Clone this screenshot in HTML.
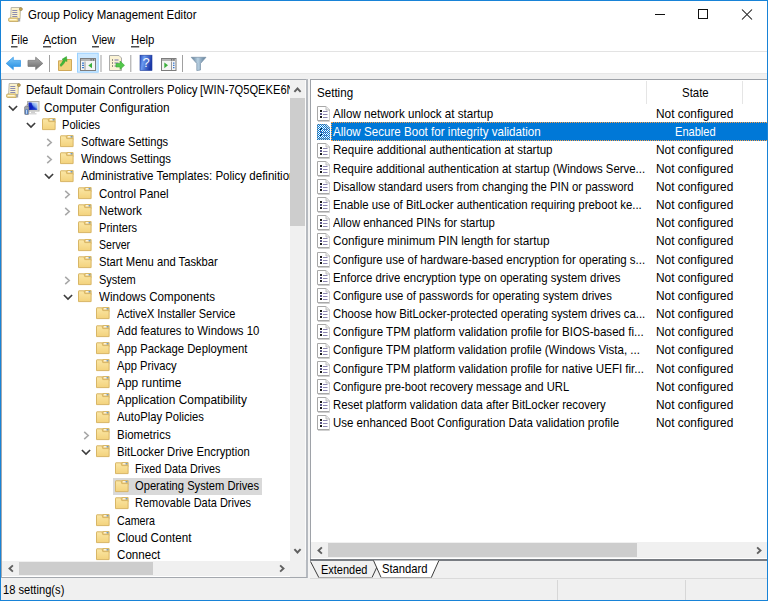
<!DOCTYPE html>
<html><head><meta charset="utf-8"><style>
html,body{margin:0;padding:0;width:768px;height:601px;overflow:hidden;background:#fff}
.b{position:absolute}
svg{display:block}
.t{position:absolute;white-space:nowrap;line-height:14px;font-family:"Liberation Sans", sans-serif}
u{text-decoration:underline;text-underline-offset:2px}
</style></head><body>
<div class="b" style="left:0px;top:0px;width:768px;height:601px;background:#fff"></div><div class="t " style="left:28.10px;top:8.10px;color:#000;font-size:11.4px;transform:scale(1.0042,1.05);transform-origin:0 7px;">Group Policy Management Editor</div><div class="b" style="left:655px;top:14px;width:10px;height:1px;background:#111"></div><div class="b" style="left:698px;top:9px;width:10px;height:10px;border:1px solid #111;box-sizing:border-box"></div><svg class="b" style="left:741px;top:9px" width="12" height="11" viewBox="0 0 12 11"><path d="M1 0.5L11 10.5M11 0.5L1 10.5" stroke="#111" stroke-width="1.05"/></svg><svg class="b" style="left:0px;top:50px" width="215" height="24" viewBox="0 50 215 24"><defs><linearGradient id="gb" x1="0" y1="0" x2="0" y2="1"><stop offset="0" stop-color="#7cc8f8"/><stop offset="1" stop-color="#1f8ae0"/></linearGradient><linearGradient id="gg" x1="0" y1="0" x2="0" y2="1"><stop offset="0" stop-color="#b0b0b0"/><stop offset="1" stop-color="#6a6a6a"/></linearGradient><linearGradient id="gh" x1="0" y1="0" x2="1" y2="0.3"><stop offset="0" stop-color="#2a4cc0"/><stop offset="0.35" stop-color="#6a9af0"/><stop offset="1" stop-color="#1c38a8"/></linearGradient><linearGradient id="gf" x1="0" y1="0" x2="1" y2="0"><stop offset="0" stop-color="#5a7890"/><stop offset="0.45" stop-color="#b8d0e2"/><stop offset="1" stop-color="#587690"/></linearGradient></defs><path d="M6.2 63.4L13.3 57.2V60.4H20.5V66.4H13.3V69.6Z" fill="url(#gb)" stroke="#3a9ae8" stroke-width="0.8" stroke-linejoin="round"/><path d="M42.8 63.4L35.7 57.2V60.4H28V66.4H35.7V69.6Z" fill="url(#gg)" stroke="#7a7a7a" stroke-width="0.8" stroke-linejoin="round"/><rect x="49" y="55" width="1" height="17" fill="#a0a0a0"/><rect x="100.5" y="55" width="1" height="17" fill="#a0a0a0"/><rect x="130.3" y="55" width="1" height="17" fill="#a0a0a0"/><rect x="182" y="55" width="1" height="17" fill="#a0a0a0"/><path d="M64 59.5H71.5V70.5H58.5V60.8H63Z" fill="#f3d27e" stroke="#c9a24e" stroke-width="0.9"/><path d="M60 65Q62 62.5 63.5 60L62 59.3L66.5 56.6L67 61.5L65.6 60.8Q64 64 61 66.5Z" fill="#3fb83a" stroke="#2f9a2a" stroke-width="0.5"/><rect x="77.5" y="53.2" width="20.7" height="19" fill="#cce8ff" stroke="#99d1ff" stroke-width="1"/><rect x="80.5" y="58.5" width="15" height="12" fill="#f4f4f4" stroke="#7d7d7d" stroke-width="1"/><rect x="81" y="59" width="14" height="2" fill="#b4b4b4"/><rect x="90.5" y="59.3" width="1.2" height="1.2" fill="#505050"/><rect x="92.8" y="59.3" width="1.2" height="1.2" fill="#505050"/><path d="M85 61.5V70" stroke="#9a9a9a" stroke-width="1"/><path d="M82 63.2H84M82 65.4H84M82 67.6H84" stroke="#3a78d0" stroke-width="1.2"/><path d="M92 62.8L88.3 65.5L92 68.2Z" fill="#3cb03c"/><path d="M109.5 55.5H119L121.5 58V70.5H109.5Z" fill="#fbf3d5" stroke="#a3a3a3" stroke-width="0.9"/><path d="M112 60H113M112 63H113M112 66H113" stroke="#303030" stroke-width="1.2"/><path d="M114.5 60H118.5M114.5 63H118.5M114.5 66H118" stroke="#7070a8" stroke-width="1"/><path d="M116 63.5H120V61L124.5 65.3L120 69.5V67H116Z" fill="#52c84a" stroke="#3aa835" stroke-width="0.6"/><rect x="140" y="55.2" width="12" height="15.3" fill="url(#gh)" stroke="#1e3c9a" stroke-width="0.6"/><text x="146.2" y="67.3" font-family="Liberation Sans" font-size="13" fill="#f4f6ff" text-anchor="middle">?</text><rect x="161.5" y="58.5" width="14.5" height="12" fill="#f4f4f4" stroke="#7d7d7d" stroke-width="1"/><rect x="162" y="59" width="13.5" height="2" fill="#b4b4b4"/><rect x="171" y="59.3" width="1.2" height="1.2" fill="#505050"/><rect x="173.3" y="59.3" width="1.2" height="1.2" fill="#505050"/><path d="M171.5 61.5V70" stroke="#9a9a9a" stroke-width="1"/><path d="M173 63.2H174.5M173 65.4H174.5M173 67.6H174.5" stroke="#3a78d0" stroke-width="1.2"/><path d="M164.3 62.6L168 65.3L164.3 68.2Z" fill="#3cb03c"/><path d="M191.2 57.3H206L200.5 63.5V70L196.8 70.6V63.5Z" fill="url(#gf)" stroke="#7890a8" stroke-width="0.7" stroke-linejoin="round"/></svg><div class="t " style="left:10.80px;top:33.10px;color:#000;font-size:11.4px;transform:scale(0.9389,1.05);transform-origin:0 7px;"><u>F</u>ile</div><div class="t " style="left:43.10px;top:33.10px;color:#000;font-size:11.4px;transform:scale(1.0613,1.05);transform-origin:0 7px;"><u>A</u>ction</div><div class="t " style="left:91.70px;top:33.10px;color:#000;font-size:11.4px;transform:scale(0.9400,1.05);transform-origin:0 7px;"><u>V</u>iew</div><div class="t " style="left:131.25px;top:33.10px;color:#000;font-size:11.4px;transform:scale(0.9978,1.05);transform-origin:0 7px;"><u>H</u>elp</div><div class="b" style="left:1px;top:51px;width:766px;height:1px;background:#e3e3e3"></div><div class="b" style="left:1px;top:73px;width:766px;height:1px;background:#e8e8e8"></div><div class="b" style="left:1px;top:74px;width:766px;height:5px;background:#f0f0f0"></div><div class="b" style="left:1px;top:79px;width:306px;height:499px;border:1px solid #a4a8ae;box-sizing:border-box;background:#fff"></div><div class="b" style="left:113px;top:478px;width:149px;height:17px;background:#d9d9d9"></div><div class="b" style="left:6px;top:83.30px"><svg width="15" height="15" viewBox="0 0 15 15"><path d="M3.2 0.5H12.6L12 11.5H2.6Z" fill="#fbf2cc" stroke="#b4b0a4" stroke-width="0.9"/><path d="M11.6 1.5V11" stroke="#f3e2a0" stroke-width="1"/><circle cx="12.9" cy="2.1" r="1.5" fill="#c9a850" stroke="#8e7a48" stroke-width="0.6"/><path d="M4.3 3.5H9.3M4.3 5.5H9.3M4.3 7.5H9.3M4.3 9.5H9.3" stroke="#8c8cb0" stroke-width="1"/><path d="M0.5 12.3Q0.5 11 1.8 11H10.2V14.5H1.8Q0.5 14.5 0.5 13.3Z" fill="#f0da92" stroke="#c0a35a" stroke-width="0.8"/><path d="M1.8 12.6H8.6" stroke="#fffae0" stroke-width="1"/><rect x="10" y="11" width="2.2" height="3.5" fill="#a6a6a6"/></svg></div><div class="t " style="left:25.69px;top:83.30px;color:#000;font-size:11.4px;transform:scale(1.0077,1.05);transform-origin:0 7px;">Default Domain Controllers Policy</div><div class="t " style="left:200.02px;top:83.30px;color:#000;font-size:11.4px;transform:scale(0.9770,1.05);transform-origin:0 7px;">[WIN-7Q5QEKE6N</div><div class="b" style="left:8.00px;top:104.52px"><svg width="10" height="7" viewBox="0 0 10 7"><path d="M0.9 1L5 5.1L9.1 1" fill="none" stroke="#3c3c3c" stroke-width="1.6"/></svg></div><div class="b" style="left:24px;top:100.62px"><svg width="16" height="14" viewBox="0 0 16 14"><defs><linearGradient id="scr" x1="0" y1="1" x2="1" y2="0"><stop offset="0" stop-color="#0010a8"/><stop offset="0.45" stop-color="#1a3cd0"/><stop offset="0.6" stop-color="#7aa4ec"/><stop offset="1" stop-color="#d8e8fc"/></linearGradient></defs><rect x="3.5" y="0.5" width="11.5" height="9.5" fill="#e8e8e4" stroke="#b0b0ac"/><rect x="4.6" y="1.6" width="8.8" height="7.3" fill="url(#scr)"/><path d="M4.6 1.6H7.5L9 6.5L4.6 8.9Z" fill="#0a1cc0" opacity="0.85"/><rect x="7" y="10" width="4" height="2" fill="#cfcfcf"/><rect x="5.5" y="12" width="7" height="1.5" fill="#d8d8d8"/><rect x="0.6" y="5.5" width="4.2" height="8" rx="0.8" fill="#a0a4a8" stroke="#7c8088" stroke-width="0.7"/><rect x="1.3" y="8.5" width="2.8" height="4.7" fill="#3f72c0"/><rect x="2" y="9" width="1.2" height="3.8" fill="#bcd6f4"/><path d="M1.5 5.5L3 3.5H5" stroke="#8a8a8a" stroke-width="0.7" fill="none"/></svg></div><div class="t " style="left:44.30px;top:100.52px;color:#000;font-size:11.4px;transform:scale(1.0392,1.05);transform-origin:0 7px;">Computer Configuration</div><div class="b" style="left:26.20px;top:121.73px"><svg width="10" height="7" viewBox="0 0 10 7"><path d="M0.9 1L5 5.1L9.1 1" fill="none" stroke="#3c3c3c" stroke-width="1.6"/></svg></div><div class="b" style="left:41.80px;top:118.03px"><svg width="15" height="13" viewBox="0 0 15 13"><defs><linearGradient id="fo" x1="0" y1="0" x2="0" y2="1"><stop offset="0" stop-color="#fbe7a6"/><stop offset="1" stop-color="#f3d27c"/></linearGradient></defs><path d="M6.5 0.5H13.1V4.5H6.5Z" fill="#ebc978" stroke="#d9b866" stroke-width="1"/><path d="M7.8 1.8H10.8" stroke="#fff" stroke-width="1.1"/><path d="M10.6 1.8H12.4" stroke="#4b8edb" stroke-width="1.1"/><path d="M0.5 1.2Q0.5 0.8 1 0.8H5.9L6.8 3.6H13.1V11.6H0.5Z" fill="url(#fo)" stroke="#d8b666" stroke-width="1"/></svg></div><div class="t " style="left:62.40px;top:117.73px;color:#000;font-size:11.4px;transform:scale(0.9718,1.05);transform-origin:0 7px;">Policies</div><div class="b" style="left:46.10px;top:138.25px"><svg width="7" height="9" viewBox="0 0 7 9"><path d="M1.2 0.9L5.2 4.5L1.2 8.1" fill="none" stroke="#a8a8a8" stroke-width="1.6"/></svg></div><div class="b" style="left:60.00px;top:135.25px"><svg width="15" height="13" viewBox="0 0 15 13"><defs><linearGradient id="fo" x1="0" y1="0" x2="0" y2="1"><stop offset="0" stop-color="#fbe7a6"/><stop offset="1" stop-color="#f3d27c"/></linearGradient></defs><path d="M6.5 0.5H13.1V4.5H6.5Z" fill="#ebc978" stroke="#d9b866" stroke-width="1"/><path d="M7.8 1.8H10.8" stroke="#fff" stroke-width="1.1"/><path d="M10.6 1.8H12.4" stroke="#4b8edb" stroke-width="1.1"/><path d="M0.5 1.2Q0.5 0.8 1 0.8H5.9L6.8 3.6H13.1V11.6H0.5Z" fill="url(#fo)" stroke="#d8b666" stroke-width="1"/></svg></div><div class="t " style="left:80.50px;top:134.95px;color:#000;font-size:11.4px;transform:scale(0.9764,1.05);transform-origin:0 7px;">Software Settings</div><div class="b" style="left:46.10px;top:155.46px"><svg width="7" height="9" viewBox="0 0 7 9"><path d="M1.2 0.9L5.2 4.5L1.2 8.1" fill="none" stroke="#a8a8a8" stroke-width="1.6"/></svg></div><div class="b" style="left:60.00px;top:152.46px"><svg width="15" height="13" viewBox="0 0 15 13"><defs><linearGradient id="fo" x1="0" y1="0" x2="0" y2="1"><stop offset="0" stop-color="#fbe7a6"/><stop offset="1" stop-color="#f3d27c"/></linearGradient></defs><path d="M6.5 0.5H13.1V4.5H6.5Z" fill="#ebc978" stroke="#d9b866" stroke-width="1"/><path d="M7.8 1.8H10.8" stroke="#fff" stroke-width="1.1"/><path d="M10.6 1.8H12.4" stroke="#4b8edb" stroke-width="1.1"/><path d="M0.5 1.2Q0.5 0.8 1 0.8H5.9L6.8 3.6H13.1V11.6H0.5Z" fill="url(#fo)" stroke="#d8b666" stroke-width="1"/></svg></div><div class="t " style="left:80.50px;top:152.16px;color:#000;font-size:11.4px;transform:scale(0.9933,1.05);transform-origin:0 7px;">Windows Settings</div><div class="b" style="left:44.40px;top:173.38px"><svg width="10" height="7" viewBox="0 0 10 7"><path d="M0.9 1L5 5.1L9.1 1" fill="none" stroke="#3c3c3c" stroke-width="1.6"/></svg></div><div class="b" style="left:60.00px;top:169.68px"><svg width="15" height="13" viewBox="0 0 15 13"><defs><linearGradient id="fo" x1="0" y1="0" x2="0" y2="1"><stop offset="0" stop-color="#fbe7a6"/><stop offset="1" stop-color="#f3d27c"/></linearGradient></defs><path d="M6.5 0.5H13.1V4.5H6.5Z" fill="#ebc978" stroke="#d9b866" stroke-width="1"/><path d="M7.8 1.8H10.8" stroke="#fff" stroke-width="1.1"/><path d="M10.6 1.8H12.4" stroke="#4b8edb" stroke-width="1.1"/><path d="M0.5 1.2Q0.5 0.8 1 0.8H5.9L6.8 3.6H13.1V11.6H0.5Z" fill="url(#fo)" stroke="#d8b666" stroke-width="1"/></svg></div><div class="t " style="left:80.50px;top:169.38px;color:#000;font-size:11.4px;transform:scale(1.0124,1.05);transform-origin:0 7px;">Administrative Templates: Policy definitions (ADMX files)</div><div class="b" style="left:64.30px;top:189.90px"><svg width="7" height="9" viewBox="0 0 7 9"><path d="M1.2 0.9L5.2 4.5L1.2 8.1" fill="none" stroke="#a8a8a8" stroke-width="1.6"/></svg></div><div class="b" style="left:78.20px;top:186.90px"><svg width="15" height="13" viewBox="0 0 15 13"><defs><linearGradient id="fo" x1="0" y1="0" x2="0" y2="1"><stop offset="0" stop-color="#fbe7a6"/><stop offset="1" stop-color="#f3d27c"/></linearGradient></defs><path d="M6.5 0.5H13.1V4.5H6.5Z" fill="#ebc978" stroke="#d9b866" stroke-width="1"/><path d="M7.8 1.8H10.8" stroke="#fff" stroke-width="1.1"/><path d="M10.6 1.8H12.4" stroke="#4b8edb" stroke-width="1.1"/><path d="M0.5 1.2Q0.5 0.8 1 0.8H5.9L6.8 3.6H13.1V11.6H0.5Z" fill="url(#fo)" stroke="#d8b666" stroke-width="1"/></svg></div><div class="t " style="left:98.60px;top:186.60px;color:#000;font-size:11.4px;transform:scale(1.0088,1.05);transform-origin:0 7px;">Control Panel</div><div class="b" style="left:64.30px;top:207.11px"><svg width="7" height="9" viewBox="0 0 7 9"><path d="M1.2 0.9L5.2 4.5L1.2 8.1" fill="none" stroke="#a8a8a8" stroke-width="1.6"/></svg></div><div class="b" style="left:78.20px;top:204.11px"><svg width="15" height="13" viewBox="0 0 15 13"><defs><linearGradient id="fo" x1="0" y1="0" x2="0" y2="1"><stop offset="0" stop-color="#fbe7a6"/><stop offset="1" stop-color="#f3d27c"/></linearGradient></defs><path d="M6.5 0.5H13.1V4.5H6.5Z" fill="#ebc978" stroke="#d9b866" stroke-width="1"/><path d="M7.8 1.8H10.8" stroke="#fff" stroke-width="1.1"/><path d="M10.6 1.8H12.4" stroke="#4b8edb" stroke-width="1.1"/><path d="M0.5 1.2Q0.5 0.8 1 0.8H5.9L6.8 3.6H13.1V11.6H0.5Z" fill="url(#fo)" stroke="#d8b666" stroke-width="1"/></svg></div><div class="t " style="left:98.60px;top:203.81px;color:#000;font-size:11.4px;transform:scale(1.0262,1.05);transform-origin:0 7px;">Network</div><div class="b" style="left:78.20px;top:221.33px"><svg width="15" height="13" viewBox="0 0 15 13"><defs><linearGradient id="fo" x1="0" y1="0" x2="0" y2="1"><stop offset="0" stop-color="#fbe7a6"/><stop offset="1" stop-color="#f3d27c"/></linearGradient></defs><path d="M6.5 0.5H13.1V4.5H6.5Z" fill="#ebc978" stroke="#d9b866" stroke-width="1"/><path d="M7.8 1.8H10.8" stroke="#fff" stroke-width="1.1"/><path d="M10.6 1.8H12.4" stroke="#4b8edb" stroke-width="1.1"/><path d="M0.5 1.2Q0.5 0.8 1 0.8H5.9L6.8 3.6H13.1V11.6H0.5Z" fill="url(#fo)" stroke="#d8b666" stroke-width="1"/></svg></div><div class="t " style="left:98.60px;top:221.03px;color:#000;font-size:11.4px;transform:scale(0.9718,1.05);transform-origin:0 7px;">Printers</div><div class="b" style="left:78.20px;top:238.54px"><svg width="15" height="13" viewBox="0 0 15 13"><defs><linearGradient id="fo" x1="0" y1="0" x2="0" y2="1"><stop offset="0" stop-color="#fbe7a6"/><stop offset="1" stop-color="#f3d27c"/></linearGradient></defs><path d="M6.5 0.5H13.1V4.5H6.5Z" fill="#ebc978" stroke="#d9b866" stroke-width="1"/><path d="M7.8 1.8H10.8" stroke="#fff" stroke-width="1.1"/><path d="M10.6 1.8H12.4" stroke="#4b8edb" stroke-width="1.1"/><path d="M0.5 1.2Q0.5 0.8 1 0.8H5.9L6.8 3.6H13.1V11.6H0.5Z" fill="url(#fo)" stroke="#d8b666" stroke-width="1"/></svg></div><div class="t " style="left:98.60px;top:238.24px;color:#000;font-size:11.4px;transform:scale(0.9273,1.05);transform-origin:0 7px;">Server</div><div class="b" style="left:78.20px;top:255.76px"><svg width="15" height="13" viewBox="0 0 15 13"><defs><linearGradient id="fo" x1="0" y1="0" x2="0" y2="1"><stop offset="0" stop-color="#fbe7a6"/><stop offset="1" stop-color="#f3d27c"/></linearGradient></defs><path d="M6.5 0.5H13.1V4.5H6.5Z" fill="#ebc978" stroke="#d9b866" stroke-width="1"/><path d="M7.8 1.8H10.8" stroke="#fff" stroke-width="1.1"/><path d="M10.6 1.8H12.4" stroke="#4b8edb" stroke-width="1.1"/><path d="M0.5 1.2Q0.5 0.8 1 0.8H5.9L6.8 3.6H13.1V11.6H0.5Z" fill="url(#fo)" stroke="#d8b666" stroke-width="1"/></svg></div><div class="t " style="left:98.60px;top:255.46px;color:#000;font-size:11.4px;transform:scale(0.9843,1.05);transform-origin:0 7px;">Start Menu and Taskbar</div><div class="b" style="left:64.30px;top:275.98px"><svg width="7" height="9" viewBox="0 0 7 9"><path d="M1.2 0.9L5.2 4.5L1.2 8.1" fill="none" stroke="#a8a8a8" stroke-width="1.6"/></svg></div><div class="b" style="left:78.20px;top:272.98px"><svg width="15" height="13" viewBox="0 0 15 13"><defs><linearGradient id="fo" x1="0" y1="0" x2="0" y2="1"><stop offset="0" stop-color="#fbe7a6"/><stop offset="1" stop-color="#f3d27c"/></linearGradient></defs><path d="M6.5 0.5H13.1V4.5H6.5Z" fill="#ebc978" stroke="#d9b866" stroke-width="1"/><path d="M7.8 1.8H10.8" stroke="#fff" stroke-width="1.1"/><path d="M10.6 1.8H12.4" stroke="#4b8edb" stroke-width="1.1"/><path d="M0.5 1.2Q0.5 0.8 1 0.8H5.9L6.8 3.6H13.1V11.6H0.5Z" fill="url(#fo)" stroke="#d8b666" stroke-width="1"/></svg></div><div class="t " style="left:98.60px;top:272.68px;color:#000;font-size:11.4px;transform:scale(0.9676,1.05);transform-origin:0 7px;">System</div><div class="b" style="left:62.60px;top:293.89px"><svg width="10" height="7" viewBox="0 0 10 7"><path d="M0.9 1L5 5.1L9.1 1" fill="none" stroke="#3c3c3c" stroke-width="1.6"/></svg></div><div class="b" style="left:78.20px;top:290.19px"><svg width="15" height="13" viewBox="0 0 15 13"><defs><linearGradient id="fo" x1="0" y1="0" x2="0" y2="1"><stop offset="0" stop-color="#fbe7a6"/><stop offset="1" stop-color="#f3d27c"/></linearGradient></defs><path d="M6.5 0.5H13.1V4.5H6.5Z" fill="#ebc978" stroke="#d9b866" stroke-width="1"/><path d="M7.8 1.8H10.8" stroke="#fff" stroke-width="1.1"/><path d="M10.6 1.8H12.4" stroke="#4b8edb" stroke-width="1.1"/><path d="M0.5 1.2Q0.5 0.8 1 0.8H5.9L6.8 3.6H13.1V11.6H0.5Z" fill="url(#fo)" stroke="#d8b666" stroke-width="1"/></svg></div><div class="t " style="left:98.60px;top:289.89px;color:#000;font-size:11.4px;transform:scale(1.0175,1.05);transform-origin:0 7px;">Windows Components</div><div class="b" style="left:96.40px;top:307.41px"><svg width="15" height="13" viewBox="0 0 15 13"><defs><linearGradient id="fo" x1="0" y1="0" x2="0" y2="1"><stop offset="0" stop-color="#fbe7a6"/><stop offset="1" stop-color="#f3d27c"/></linearGradient></defs><path d="M6.5 0.5H13.1V4.5H6.5Z" fill="#ebc978" stroke="#d9b866" stroke-width="1"/><path d="M7.8 1.8H10.8" stroke="#fff" stroke-width="1.1"/><path d="M10.6 1.8H12.4" stroke="#4b8edb" stroke-width="1.1"/><path d="M0.5 1.2Q0.5 0.8 1 0.8H5.9L6.8 3.6H13.1V11.6H0.5Z" fill="url(#fo)" stroke="#d8b666" stroke-width="1"/></svg></div><div class="t " style="left:116.70px;top:307.11px;color:#000;font-size:11.4px;transform:scale(0.9642,1.05);transform-origin:0 7px;">ActiveX Installer Service</div><div class="b" style="left:96.40px;top:324.62px"><svg width="15" height="13" viewBox="0 0 15 13"><defs><linearGradient id="fo" x1="0" y1="0" x2="0" y2="1"><stop offset="0" stop-color="#fbe7a6"/><stop offset="1" stop-color="#f3d27c"/></linearGradient></defs><path d="M6.5 0.5H13.1V4.5H6.5Z" fill="#ebc978" stroke="#d9b866" stroke-width="1"/><path d="M7.8 1.8H10.8" stroke="#fff" stroke-width="1.1"/><path d="M10.6 1.8H12.4" stroke="#4b8edb" stroke-width="1.1"/><path d="M0.5 1.2Q0.5 0.8 1 0.8H5.9L6.8 3.6H13.1V11.6H0.5Z" fill="url(#fo)" stroke="#d8b666" stroke-width="1"/></svg></div><div class="t " style="left:116.70px;top:324.32px;color:#000;font-size:11.4px;transform:scale(0.9993,1.05);transform-origin:0 7px;">Add features to Windows 10</div><div class="b" style="left:96.40px;top:341.84px"><svg width="15" height="13" viewBox="0 0 15 13"><defs><linearGradient id="fo" x1="0" y1="0" x2="0" y2="1"><stop offset="0" stop-color="#fbe7a6"/><stop offset="1" stop-color="#f3d27c"/></linearGradient></defs><path d="M6.5 0.5H13.1V4.5H6.5Z" fill="#ebc978" stroke="#d9b866" stroke-width="1"/><path d="M7.8 1.8H10.8" stroke="#fff" stroke-width="1.1"/><path d="M10.6 1.8H12.4" stroke="#4b8edb" stroke-width="1.1"/><path d="M0.5 1.2Q0.5 0.8 1 0.8H5.9L6.8 3.6H13.1V11.6H0.5Z" fill="url(#fo)" stroke="#d8b666" stroke-width="1"/></svg></div><div class="t " style="left:116.70px;top:341.54px;color:#000;font-size:11.4px;transform:scale(0.9902,1.05);transform-origin:0 7px;">App Package Deployment</div><div class="b" style="left:96.40px;top:359.06px"><svg width="15" height="13" viewBox="0 0 15 13"><defs><linearGradient id="fo" x1="0" y1="0" x2="0" y2="1"><stop offset="0" stop-color="#fbe7a6"/><stop offset="1" stop-color="#f3d27c"/></linearGradient></defs><path d="M6.5 0.5H13.1V4.5H6.5Z" fill="#ebc978" stroke="#d9b866" stroke-width="1"/><path d="M7.8 1.8H10.8" stroke="#fff" stroke-width="1.1"/><path d="M10.6 1.8H12.4" stroke="#4b8edb" stroke-width="1.1"/><path d="M0.5 1.2Q0.5 0.8 1 0.8H5.9L6.8 3.6H13.1V11.6H0.5Z" fill="url(#fo)" stroke="#d8b666" stroke-width="1"/></svg></div><div class="t " style="left:116.70px;top:358.76px;color:#000;font-size:11.4px;transform:scale(0.9820,1.05);transform-origin:0 7px;">App Privacy</div><div class="b" style="left:96.40px;top:376.27px"><svg width="15" height="13" viewBox="0 0 15 13"><defs><linearGradient id="fo" x1="0" y1="0" x2="0" y2="1"><stop offset="0" stop-color="#fbe7a6"/><stop offset="1" stop-color="#f3d27c"/></linearGradient></defs><path d="M6.5 0.5H13.1V4.5H6.5Z" fill="#ebc978" stroke="#d9b866" stroke-width="1"/><path d="M7.8 1.8H10.8" stroke="#fff" stroke-width="1.1"/><path d="M10.6 1.8H12.4" stroke="#4b8edb" stroke-width="1.1"/><path d="M0.5 1.2Q0.5 0.8 1 0.8H5.9L6.8 3.6H13.1V11.6H0.5Z" fill="url(#fo)" stroke="#d8b666" stroke-width="1"/></svg></div><div class="t " style="left:116.70px;top:375.97px;color:#000;font-size:11.4px;transform:scale(1.0492,1.05);transform-origin:0 7px;">App runtime</div><div class="b" style="left:96.40px;top:393.49px"><svg width="15" height="13" viewBox="0 0 15 13"><defs><linearGradient id="fo" x1="0" y1="0" x2="0" y2="1"><stop offset="0" stop-color="#fbe7a6"/><stop offset="1" stop-color="#f3d27c"/></linearGradient></defs><path d="M6.5 0.5H13.1V4.5H6.5Z" fill="#ebc978" stroke="#d9b866" stroke-width="1"/><path d="M7.8 1.8H10.8" stroke="#fff" stroke-width="1.1"/><path d="M10.6 1.8H12.4" stroke="#4b8edb" stroke-width="1.1"/><path d="M0.5 1.2Q0.5 0.8 1 0.8H5.9L6.8 3.6H13.1V11.6H0.5Z" fill="url(#fo)" stroke="#d8b666" stroke-width="1"/></svg></div><div class="t " style="left:116.70px;top:393.19px;color:#000;font-size:11.4px;transform:scale(1.0468,1.05);transform-origin:0 7px;">Application Compatibility</div><div class="b" style="left:96.40px;top:410.70px"><svg width="15" height="13" viewBox="0 0 15 13"><defs><linearGradient id="fo" x1="0" y1="0" x2="0" y2="1"><stop offset="0" stop-color="#fbe7a6"/><stop offset="1" stop-color="#f3d27c"/></linearGradient></defs><path d="M6.5 0.5H13.1V4.5H6.5Z" fill="#ebc978" stroke="#d9b866" stroke-width="1"/><path d="M7.8 1.8H10.8" stroke="#fff" stroke-width="1.1"/><path d="M10.6 1.8H12.4" stroke="#4b8edb" stroke-width="1.1"/><path d="M0.5 1.2Q0.5 0.8 1 0.8H5.9L6.8 3.6H13.1V11.6H0.5Z" fill="url(#fo)" stroke="#d8b666" stroke-width="1"/></svg></div><div class="t " style="left:116.70px;top:410.40px;color:#000;font-size:11.4px;transform:scale(0.9875,1.05);transform-origin:0 7px;">AutoPlay Policies</div><div class="b" style="left:82.50px;top:430.92px"><svg width="7" height="9" viewBox="0 0 7 9"><path d="M1.2 0.9L5.2 4.5L1.2 8.1" fill="none" stroke="#a8a8a8" stroke-width="1.6"/></svg></div><div class="b" style="left:96.40px;top:427.92px"><svg width="15" height="13" viewBox="0 0 15 13"><defs><linearGradient id="fo" x1="0" y1="0" x2="0" y2="1"><stop offset="0" stop-color="#fbe7a6"/><stop offset="1" stop-color="#f3d27c"/></linearGradient></defs><path d="M6.5 0.5H13.1V4.5H6.5Z" fill="#ebc978" stroke="#d9b866" stroke-width="1"/><path d="M7.8 1.8H10.8" stroke="#fff" stroke-width="1.1"/><path d="M10.6 1.8H12.4" stroke="#4b8edb" stroke-width="1.1"/><path d="M0.5 1.2Q0.5 0.8 1 0.8H5.9L6.8 3.6H13.1V11.6H0.5Z" fill="url(#fo)" stroke="#d8b666" stroke-width="1"/></svg></div><div class="t " style="left:116.70px;top:427.62px;color:#000;font-size:11.4px;transform:scale(1.0094,1.05);transform-origin:0 7px;">Biometrics</div><div class="b" style="left:80.80px;top:448.84px"><svg width="10" height="7" viewBox="0 0 10 7"><path d="M0.9 1L5 5.1L9.1 1" fill="none" stroke="#3c3c3c" stroke-width="1.6"/></svg></div><div class="b" style="left:96.40px;top:445.14px"><svg width="15" height="13" viewBox="0 0 15 13"><defs><linearGradient id="fo" x1="0" y1="0" x2="0" y2="1"><stop offset="0" stop-color="#fbe7a6"/><stop offset="1" stop-color="#f3d27c"/></linearGradient></defs><path d="M6.5 0.5H13.1V4.5H6.5Z" fill="#ebc978" stroke="#d9b866" stroke-width="1"/><path d="M7.8 1.8H10.8" stroke="#fff" stroke-width="1.1"/><path d="M10.6 1.8H12.4" stroke="#4b8edb" stroke-width="1.1"/><path d="M0.5 1.2Q0.5 0.8 1 0.8H5.9L6.8 3.6H13.1V11.6H0.5Z" fill="url(#fo)" stroke="#d8b666" stroke-width="1"/></svg></div><div class="t " style="left:116.70px;top:444.84px;color:#000;font-size:11.4px;transform:scale(0.9888,1.05);transform-origin:0 7px;">BitLocker Drive Encryption</div><div class="b" style="left:114.60px;top:462.35px"><svg width="15" height="13" viewBox="0 0 15 13"><defs><linearGradient id="fo" x1="0" y1="0" x2="0" y2="1"><stop offset="0" stop-color="#fbe7a6"/><stop offset="1" stop-color="#f3d27c"/></linearGradient></defs><path d="M6.5 0.5H13.1V4.5H6.5Z" fill="#ebc978" stroke="#d9b866" stroke-width="1"/><path d="M7.8 1.8H10.8" stroke="#fff" stroke-width="1.1"/><path d="M10.6 1.8H12.4" stroke="#4b8edb" stroke-width="1.1"/><path d="M0.5 1.2Q0.5 0.8 1 0.8H5.9L6.8 3.6H13.1V11.6H0.5Z" fill="url(#fo)" stroke="#d8b666" stroke-width="1"/></svg></div><div class="t " style="left:134.80px;top:462.05px;color:#000;font-size:11.4px;transform:scale(0.9444,1.05);transform-origin:0 7px;">Fixed Data Drives</div><div class="b" style="left:114.60px;top:479.57px"><svg width="15" height="13" viewBox="0 0 15 13"><defs><linearGradient id="fo" x1="0" y1="0" x2="0" y2="1"><stop offset="0" stop-color="#fbe7a6"/><stop offset="1" stop-color="#f3d27c"/></linearGradient></defs><path d="M6.5 0.5H13.1V4.5H6.5Z" fill="#ebc978" stroke="#d9b866" stroke-width="1"/><path d="M7.8 1.8H10.8" stroke="#fff" stroke-width="1.1"/><path d="M10.6 1.8H12.4" stroke="#4b8edb" stroke-width="1.1"/><path d="M0.5 1.2Q0.5 0.8 1 0.8H5.9L6.8 3.6H13.1V11.6H0.5Z" fill="url(#fo)" stroke="#d8b666" stroke-width="1"/></svg></div><div class="t " style="left:134.80px;top:479.27px;color:#000;font-size:11.4px;transform:scale(0.9802,1.05);transform-origin:0 7px;">Operating System Drives</div><div class="b" style="left:114.60px;top:496.78px"><svg width="15" height="13" viewBox="0 0 15 13"><defs><linearGradient id="fo" x1="0" y1="0" x2="0" y2="1"><stop offset="0" stop-color="#fbe7a6"/><stop offset="1" stop-color="#f3d27c"/></linearGradient></defs><path d="M6.5 0.5H13.1V4.5H6.5Z" fill="#ebc978" stroke="#d9b866" stroke-width="1"/><path d="M7.8 1.8H10.8" stroke="#fff" stroke-width="1.1"/><path d="M10.6 1.8H12.4" stroke="#4b8edb" stroke-width="1.1"/><path d="M0.5 1.2Q0.5 0.8 1 0.8H5.9L6.8 3.6H13.1V11.6H0.5Z" fill="url(#fo)" stroke="#d8b666" stroke-width="1"/></svg></div><div class="t " style="left:134.80px;top:496.48px;color:#000;font-size:11.4px;transform:scale(0.9650,1.05);transform-origin:0 7px;">Removable Data Drives</div><div class="b" style="left:96.40px;top:514.00px"><svg width="15" height="13" viewBox="0 0 15 13"><defs><linearGradient id="fo" x1="0" y1="0" x2="0" y2="1"><stop offset="0" stop-color="#fbe7a6"/><stop offset="1" stop-color="#f3d27c"/></linearGradient></defs><path d="M6.5 0.5H13.1V4.5H6.5Z" fill="#ebc978" stroke="#d9b866" stroke-width="1"/><path d="M7.8 1.8H10.8" stroke="#fff" stroke-width="1.1"/><path d="M10.6 1.8H12.4" stroke="#4b8edb" stroke-width="1.1"/><path d="M0.5 1.2Q0.5 0.8 1 0.8H5.9L6.8 3.6H13.1V11.6H0.5Z" fill="url(#fo)" stroke="#d8b666" stroke-width="1"/></svg></div><div class="t " style="left:116.70px;top:513.70px;color:#000;font-size:11.4px;transform:scale(0.9390,1.05);transform-origin:0 7px;">Camera</div><div class="b" style="left:96.40px;top:531.22px"><svg width="15" height="13" viewBox="0 0 15 13"><defs><linearGradient id="fo" x1="0" y1="0" x2="0" y2="1"><stop offset="0" stop-color="#fbe7a6"/><stop offset="1" stop-color="#f3d27c"/></linearGradient></defs><path d="M6.5 0.5H13.1V4.5H6.5Z" fill="#ebc978" stroke="#d9b866" stroke-width="1"/><path d="M7.8 1.8H10.8" stroke="#fff" stroke-width="1.1"/><path d="M10.6 1.8H12.4" stroke="#4b8edb" stroke-width="1.1"/><path d="M0.5 1.2Q0.5 0.8 1 0.8H5.9L6.8 3.6H13.1V11.6H0.5Z" fill="url(#fo)" stroke="#d8b666" stroke-width="1"/></svg></div><div class="t " style="left:116.70px;top:530.92px;color:#000;font-size:11.4px;transform:scale(1.0212,1.05);transform-origin:0 7px;">Cloud Content</div><div class="b" style="left:96.40px;top:548.43px"><svg width="15" height="13" viewBox="0 0 15 13"><defs><linearGradient id="fo" x1="0" y1="0" x2="0" y2="1"><stop offset="0" stop-color="#fbe7a6"/><stop offset="1" stop-color="#f3d27c"/></linearGradient></defs><path d="M6.5 0.5H13.1V4.5H6.5Z" fill="#ebc978" stroke="#d9b866" stroke-width="1"/><path d="M7.8 1.8H10.8" stroke="#fff" stroke-width="1.1"/><path d="M10.6 1.8H12.4" stroke="#4b8edb" stroke-width="1.1"/><path d="M0.5 1.2Q0.5 0.8 1 0.8H5.9L6.8 3.6H13.1V11.6H0.5Z" fill="url(#fo)" stroke="#d8b666" stroke-width="1"/></svg></div><div class="t " style="left:116.70px;top:548.13px;color:#000;font-size:11.4px;transform:scale(1.0214,1.05);transform-origin:0 7px;">Connect</div><div class="b" style="left:306px;top:79px;width:2px;height:499px;background:#b6bac0"></div><div class="b" style="left:290px;top:80px;width:15px;height:480px;background:#f0f0f0"></div><div class="b" style="left:305px;top:80px;width:1px;height:480px;background:#fbfbfb"></div><div class="b" style="left:290.2px;top:97.8px;width:14.5px;height:128px;background:#cdcdcd"></div><svg class="b" style="left:293px;top:86px" width="9" height="8" viewBox="0 0 9 8"><path d="M1.4 5.9L4.5 2.5L7.6 5.9" fill="none" stroke="#606060" stroke-width="1.9"/></svg><svg class="b" style="left:293px;top:547px" width="9" height="8" viewBox="0 0 9 8"><path d="M1.4 2.1L4.5 5.5L7.6 2.1" fill="none" stroke="#606060" stroke-width="1.9"/></svg><div class="b" style="left:2px;top:561px;width:288px;height:15px;background:#f0f0f0"></div><div class="b" style="left:290px;top:560px;width:16px;height:17px;background:#f0f0f0"></div><div class="b" style="left:19px;top:561.7px;width:134px;height:13px;background:#cdcdcd"></div><svg class="b" style="left:7px;top:564px" width="8" height="9" viewBox="0 0 8 9"><path d="M5.9 1.4L2.5 4.5L5.9 7.6" fill="none" stroke="#606060" stroke-width="1.9"/></svg><svg class="b" style="left:278px;top:564px" width="8" height="9" viewBox="0 0 8 9"><path d="M2.1 1.4L5.5 4.5L2.1 7.6" fill="none" stroke="#606060" stroke-width="1.9"/></svg><div class="b" style="left:308px;top:79px;width:2px;height:499px;background:#f4f4f4"></div><div class="b" style="left:310px;top:79px;width:457px;height:482px;border:1px solid #9ea2a8;border-right:none;box-sizing:border-box;background:#fff"></div><div class="b" style="left:310px;top:559px;width:457px;height:2px;background:#787c82"></div><div class="t " style="left:317.18px;top:86.20px;color:#000;font-size:11.4px;transform:scale(1.0176,1.05);transform-origin:0 7px;">Setting</div><div class="b" style="left:646px;top:81px;width:1px;height:23px;background:#e5e5e5"></div><div class="b" style="left:742px;top:81px;width:1px;height:23px;background:#e5e5e5"></div><div class="t " style="left:681.60px;top:86.20px;color:#000;font-size:11.4px;transform:scale(1.0040,1.05);transform-origin:0 7px;">State</div><div class="b" style="left:316px;top:106px"><svg width="15" height="16" viewBox="0 0 15 16"><path d="M1.5 0.5H10L13.5 4V14.5H1.5Z" fill="#fff" stroke="#a8a8a8"/><path d="M13.5 4.5V15.5H2" fill="none" stroke="#d0d0d0"/><path d="M10 0.5V4H13.5" fill="#ececec" stroke="#c0c0c0"/><rect x="4" y="4" width="2" height="2" fill="#1a1a1a"/><rect x="4" y="7" width="2" height="2" fill="#5a5488"/><rect x="4" y="10" width="2" height="2" fill="#1a1a1a"/><path d="M7 5.5H11.5M7 8.5H11.5M7 11.5H11.5" stroke="#8a84b0" stroke-width="1"/></svg></div><div class="t " style="left:333.20px;top:107.10px;color:#000;font-size:11.4px;transform:scale(1.0204,1.05);transform-origin:0 7px;">Allow network unlock at startup</div><div class="t " style="left:655.56px;top:107.10px;color:#000;font-size:11.4px;transform:scale(1.0425,1.05);transform-origin:0 7px;">Not configured</div><div class="b" style="left:331px;top:122px;width:436px;height:19px;background:#0078d7;border:1px dotted #f9a04a;border-right:none;box-sizing:border-box"></div><div class="b" style="left:316px;top:124px"><svg width="15" height="16" viewBox="0 0 15 16"><path d="M1.5 0.5H10L13.5 4V14.5H1.5Z" fill="#fff" stroke="#a8a8a8"/><path d="M13.5 4.5V15.5H2" fill="none" stroke="#d0d0d0"/><path d="M10 0.5V4H13.5" fill="#ececec" stroke="#c0c0c0"/><rect x="4" y="4" width="2" height="2" fill="#1a1a1a"/><rect x="4" y="7" width="2" height="2" fill="#5a5488"/><rect x="4" y="10" width="2" height="2" fill="#1a1a1a"/><path d="M7 5.5H11.5M7 8.5H11.5M7 11.5H11.5" stroke="#8a84b0" stroke-width="1"/><defs><pattern id="dith" width="2" height="2" patternUnits="userSpaceOnUse"><rect x="0" y="0" width="1" height="1" fill="#0078d7"/><rect x="1" y="1" width="1" height="1" fill="#0078d7"/></pattern></defs><path d="M1 0H10.2L14 3.8V16H1Z" fill="url(#dith)"/></svg></div><div class="t " style="left:333.20px;top:125.28px;color:#fff;font-size:11.4px;transform:scale(1.0187,1.05);transform-origin:0 7px;">Allow Secure Boot for integrity validation</div><div class="t " style="left:674.93px;top:125.28px;color:#fff;font-size:11.4px;transform:scale(0.9725,1.05);transform-origin:0 7px;">Enabled</div><div class="b" style="left:316px;top:143px"><svg width="15" height="16" viewBox="0 0 15 16"><path d="M1.5 0.5H10L13.5 4V14.5H1.5Z" fill="#fff" stroke="#a8a8a8"/><path d="M13.5 4.5V15.5H2" fill="none" stroke="#d0d0d0"/><path d="M10 0.5V4H13.5" fill="#ececec" stroke="#c0c0c0"/><rect x="4" y="4" width="2" height="2" fill="#1a1a1a"/><rect x="4" y="7" width="2" height="2" fill="#5a5488"/><rect x="4" y="10" width="2" height="2" fill="#1a1a1a"/><path d="M7 5.5H11.5M7 8.5H11.5M7 11.5H11.5" stroke="#8a84b0" stroke-width="1"/></svg></div><div class="t " style="left:333.20px;top:143.46px;color:#000;font-size:11.4px;transform:scale(1.0134,1.05);transform-origin:0 7px;">Require additional authentication at startup</div><div class="t " style="left:655.56px;top:143.46px;color:#000;font-size:11.4px;transform:scale(1.0425,1.05);transform-origin:0 7px;">Not configured</div><div class="b" style="left:316px;top:161px"><svg width="15" height="16" viewBox="0 0 15 16"><path d="M1.5 0.5H10L13.5 4V14.5H1.5Z" fill="#fff" stroke="#a8a8a8"/><path d="M13.5 4.5V15.5H2" fill="none" stroke="#d0d0d0"/><path d="M10 0.5V4H13.5" fill="#ececec" stroke="#c0c0c0"/><rect x="4" y="4" width="2" height="2" fill="#1a1a1a"/><rect x="4" y="7" width="2" height="2" fill="#5a5488"/><rect x="4" y="10" width="2" height="2" fill="#1a1a1a"/><path d="M7 5.5H11.5M7 8.5H11.5M7 11.5H11.5" stroke="#8a84b0" stroke-width="1"/></svg></div><div class="t " style="left:333.20px;top:161.64px;color:#000;font-size:11.4px;transform:scale(0.9997,1.05);transform-origin:0 7px;">Require additional authentication at startup (Windows Serve...</div><div class="t " style="left:655.56px;top:161.64px;color:#000;font-size:11.4px;transform:scale(1.0425,1.05);transform-origin:0 7px;">Not configured</div><div class="b" style="left:316px;top:179px"><svg width="15" height="16" viewBox="0 0 15 16"><path d="M1.5 0.5H10L13.5 4V14.5H1.5Z" fill="#fff" stroke="#a8a8a8"/><path d="M13.5 4.5V15.5H2" fill="none" stroke="#d0d0d0"/><path d="M10 0.5V4H13.5" fill="#ececec" stroke="#c0c0c0"/><rect x="4" y="4" width="2" height="2" fill="#1a1a1a"/><rect x="4" y="7" width="2" height="2" fill="#5a5488"/><rect x="4" y="10" width="2" height="2" fill="#1a1a1a"/><path d="M7 5.5H11.5M7 8.5H11.5M7 11.5H11.5" stroke="#8a84b0" stroke-width="1"/></svg></div><div class="t " style="left:333.20px;top:179.82px;color:#000;font-size:11.4px;transform:scale(0.9934,1.05);transform-origin:0 7px;">Disallow standard users from changing the PIN or password</div><div class="t " style="left:655.56px;top:179.82px;color:#000;font-size:11.4px;transform:scale(1.0425,1.05);transform-origin:0 7px;">Not configured</div><div class="b" style="left:316px;top:197px"><svg width="15" height="16" viewBox="0 0 15 16"><path d="M1.5 0.5H10L13.5 4V14.5H1.5Z" fill="#fff" stroke="#a8a8a8"/><path d="M13.5 4.5V15.5H2" fill="none" stroke="#d0d0d0"/><path d="M10 0.5V4H13.5" fill="#ececec" stroke="#c0c0c0"/><rect x="4" y="4" width="2" height="2" fill="#1a1a1a"/><rect x="4" y="7" width="2" height="2" fill="#5a5488"/><rect x="4" y="10" width="2" height="2" fill="#1a1a1a"/><path d="M7 5.5H11.5M7 8.5H11.5M7 11.5H11.5" stroke="#8a84b0" stroke-width="1"/></svg></div><div class="t " style="left:333.20px;top:198.00px;color:#000;font-size:11.4px;transform:scale(1.0013,1.05);transform-origin:0 7px;">Enable use of BitLocker authentication requiring preboot ke...</div><div class="t " style="left:655.56px;top:198.00px;color:#000;font-size:11.4px;transform:scale(1.0425,1.05);transform-origin:0 7px;">Not configured</div><div class="b" style="left:316px;top:215px"><svg width="15" height="16" viewBox="0 0 15 16"><path d="M1.5 0.5H10L13.5 4V14.5H1.5Z" fill="#fff" stroke="#a8a8a8"/><path d="M13.5 4.5V15.5H2" fill="none" stroke="#d0d0d0"/><path d="M10 0.5V4H13.5" fill="#ececec" stroke="#c0c0c0"/><rect x="4" y="4" width="2" height="2" fill="#1a1a1a"/><rect x="4" y="7" width="2" height="2" fill="#5a5488"/><rect x="4" y="10" width="2" height="2" fill="#1a1a1a"/><path d="M7 5.5H11.5M7 8.5H11.5M7 11.5H11.5" stroke="#8a84b0" stroke-width="1"/></svg></div><div class="t " style="left:333.20px;top:216.18px;color:#000;font-size:11.4px;transform:scale(0.9951,1.05);transform-origin:0 7px;">Allow enhanced PINs for startup</div><div class="t " style="left:655.56px;top:216.18px;color:#000;font-size:11.4px;transform:scale(1.0425,1.05);transform-origin:0 7px;">Not configured</div><div class="b" style="left:316px;top:233px"><svg width="15" height="16" viewBox="0 0 15 16"><path d="M1.5 0.5H10L13.5 4V14.5H1.5Z" fill="#fff" stroke="#a8a8a8"/><path d="M13.5 4.5V15.5H2" fill="none" stroke="#d0d0d0"/><path d="M10 0.5V4H13.5" fill="#ececec" stroke="#c0c0c0"/><rect x="4" y="4" width="2" height="2" fill="#1a1a1a"/><rect x="4" y="7" width="2" height="2" fill="#5a5488"/><rect x="4" y="10" width="2" height="2" fill="#1a1a1a"/><path d="M7 5.5H11.5M7 8.5H11.5M7 11.5H11.5" stroke="#8a84b0" stroke-width="1"/></svg></div><div class="t " style="left:333.20px;top:234.36px;color:#000;font-size:11.4px;transform:scale(1.0335,1.05);transform-origin:0 7px;">Configure minimum PIN length for startup</div><div class="t " style="left:655.56px;top:234.36px;color:#000;font-size:11.4px;transform:scale(1.0425,1.05);transform-origin:0 7px;">Not configured</div><div class="b" style="left:316px;top:252px"><svg width="15" height="16" viewBox="0 0 15 16"><path d="M1.5 0.5H10L13.5 4V14.5H1.5Z" fill="#fff" stroke="#a8a8a8"/><path d="M13.5 4.5V15.5H2" fill="none" stroke="#d0d0d0"/><path d="M10 0.5V4H13.5" fill="#ececec" stroke="#c0c0c0"/><rect x="4" y="4" width="2" height="2" fill="#1a1a1a"/><rect x="4" y="7" width="2" height="2" fill="#5a5488"/><rect x="4" y="10" width="2" height="2" fill="#1a1a1a"/><path d="M7 5.5H11.5M7 8.5H11.5M7 11.5H11.5" stroke="#8a84b0" stroke-width="1"/></svg></div><div class="t " style="left:333.20px;top:252.54px;color:#000;font-size:11.4px;transform:scale(1.0061,1.05);transform-origin:0 7px;">Configure use of hardware-based encryption for operating s...</div><div class="t " style="left:655.56px;top:252.54px;color:#000;font-size:11.4px;transform:scale(1.0425,1.05);transform-origin:0 7px;">Not configured</div><div class="b" style="left:316px;top:270px"><svg width="15" height="16" viewBox="0 0 15 16"><path d="M1.5 0.5H10L13.5 4V14.5H1.5Z" fill="#fff" stroke="#a8a8a8"/><path d="M13.5 4.5V15.5H2" fill="none" stroke="#d0d0d0"/><path d="M10 0.5V4H13.5" fill="#ececec" stroke="#c0c0c0"/><rect x="4" y="4" width="2" height="2" fill="#1a1a1a"/><rect x="4" y="7" width="2" height="2" fill="#5a5488"/><rect x="4" y="10" width="2" height="2" fill="#1a1a1a"/><path d="M7 5.5H11.5M7 8.5H11.5M7 11.5H11.5" stroke="#8a84b0" stroke-width="1"/></svg></div><div class="t " style="left:333.20px;top:270.72px;color:#000;font-size:11.4px;transform:scale(1.0024,1.05);transform-origin:0 7px;">Enforce drive encryption type on operating system drives</div><div class="t " style="left:655.56px;top:270.72px;color:#000;font-size:11.4px;transform:scale(1.0425,1.05);transform-origin:0 7px;">Not configured</div><div class="b" style="left:316px;top:288px"><svg width="15" height="16" viewBox="0 0 15 16"><path d="M1.5 0.5H10L13.5 4V14.5H1.5Z" fill="#fff" stroke="#a8a8a8"/><path d="M13.5 4.5V15.5H2" fill="none" stroke="#d0d0d0"/><path d="M10 0.5V4H13.5" fill="#ececec" stroke="#c0c0c0"/><rect x="4" y="4" width="2" height="2" fill="#1a1a1a"/><rect x="4" y="7" width="2" height="2" fill="#5a5488"/><rect x="4" y="10" width="2" height="2" fill="#1a1a1a"/><path d="M7 5.5H11.5M7 8.5H11.5M7 11.5H11.5" stroke="#8a84b0" stroke-width="1"/></svg></div><div class="t " style="left:333.20px;top:288.90px;color:#000;font-size:11.4px;transform:scale(0.9918,1.05);transform-origin:0 7px;">Configure use of passwords for operating system drives</div><div class="t " style="left:655.56px;top:288.90px;color:#000;font-size:11.4px;transform:scale(1.0425,1.05);transform-origin:0 7px;">Not configured</div><div class="b" style="left:316px;top:306px"><svg width="15" height="16" viewBox="0 0 15 16"><path d="M1.5 0.5H10L13.5 4V14.5H1.5Z" fill="#fff" stroke="#a8a8a8"/><path d="M13.5 4.5V15.5H2" fill="none" stroke="#d0d0d0"/><path d="M10 0.5V4H13.5" fill="#ececec" stroke="#c0c0c0"/><rect x="4" y="4" width="2" height="2" fill="#1a1a1a"/><rect x="4" y="7" width="2" height="2" fill="#5a5488"/><rect x="4" y="10" width="2" height="2" fill="#1a1a1a"/><path d="M7 5.5H11.5M7 8.5H11.5M7 11.5H11.5" stroke="#8a84b0" stroke-width="1"/></svg></div><div class="t " style="left:333.20px;top:307.08px;color:#000;font-size:11.4px;transform:scale(0.9962,1.05);transform-origin:0 7px;">Choose how BitLocker-protected operating system drives ca...</div><div class="t " style="left:655.56px;top:307.08px;color:#000;font-size:11.4px;transform:scale(1.0425,1.05);transform-origin:0 7px;">Not configured</div><div class="b" style="left:316px;top:324px"><svg width="15" height="16" viewBox="0 0 15 16"><path d="M1.5 0.5H10L13.5 4V14.5H1.5Z" fill="#fff" stroke="#a8a8a8"/><path d="M13.5 4.5V15.5H2" fill="none" stroke="#d0d0d0"/><path d="M10 0.5V4H13.5" fill="#ececec" stroke="#c0c0c0"/><rect x="4" y="4" width="2" height="2" fill="#1a1a1a"/><rect x="4" y="7" width="2" height="2" fill="#5a5488"/><rect x="4" y="10" width="2" height="2" fill="#1a1a1a"/><path d="M7 5.5H11.5M7 8.5H11.5M7 11.5H11.5" stroke="#8a84b0" stroke-width="1"/></svg></div><div class="t " style="left:333.20px;top:325.26px;color:#000;font-size:11.4px;transform:scale(1.0144,1.05);transform-origin:0 7px;">Configure TPM platform validation profile for BIOS-based fi...</div><div class="t " style="left:655.56px;top:325.26px;color:#000;font-size:11.4px;transform:scale(1.0425,1.05);transform-origin:0 7px;">Not configured</div><div class="b" style="left:316px;top:343px"><svg width="15" height="16" viewBox="0 0 15 16"><path d="M1.5 0.5H10L13.5 4V14.5H1.5Z" fill="#fff" stroke="#a8a8a8"/><path d="M13.5 4.5V15.5H2" fill="none" stroke="#d0d0d0"/><path d="M10 0.5V4H13.5" fill="#ececec" stroke="#c0c0c0"/><rect x="4" y="4" width="2" height="2" fill="#1a1a1a"/><rect x="4" y="7" width="2" height="2" fill="#5a5488"/><rect x="4" y="10" width="2" height="2" fill="#1a1a1a"/><path d="M7 5.5H11.5M7 8.5H11.5M7 11.5H11.5" stroke="#8a84b0" stroke-width="1"/></svg></div><div class="t " style="left:333.20px;top:343.44px;color:#000;font-size:11.4px;transform:scale(1.0116,1.05);transform-origin:0 7px;">Configure TPM platform validation profile (Windows Vista, ...</div><div class="t " style="left:655.56px;top:343.44px;color:#000;font-size:11.4px;transform:scale(1.0425,1.05);transform-origin:0 7px;">Not configured</div><div class="b" style="left:316px;top:361px"><svg width="15" height="16" viewBox="0 0 15 16"><path d="M1.5 0.5H10L13.5 4V14.5H1.5Z" fill="#fff" stroke="#a8a8a8"/><path d="M13.5 4.5V15.5H2" fill="none" stroke="#d0d0d0"/><path d="M10 0.5V4H13.5" fill="#ececec" stroke="#c0c0c0"/><rect x="4" y="4" width="2" height="2" fill="#1a1a1a"/><rect x="4" y="7" width="2" height="2" fill="#5a5488"/><rect x="4" y="10" width="2" height="2" fill="#1a1a1a"/><path d="M7 5.5H11.5M7 8.5H11.5M7 11.5H11.5" stroke="#8a84b0" stroke-width="1"/></svg></div><div class="t " style="left:333.20px;top:361.62px;color:#000;font-size:11.4px;transform:scale(1.0134,1.05);transform-origin:0 7px;">Configure TPM platform validation profile for native UEFI fir...</div><div class="t " style="left:655.56px;top:361.62px;color:#000;font-size:11.4px;transform:scale(1.0425,1.05);transform-origin:0 7px;">Not configured</div><div class="b" style="left:316px;top:379px"><svg width="15" height="16" viewBox="0 0 15 16"><path d="M1.5 0.5H10L13.5 4V14.5H1.5Z" fill="#fff" stroke="#a8a8a8"/><path d="M13.5 4.5V15.5H2" fill="none" stroke="#d0d0d0"/><path d="M10 0.5V4H13.5" fill="#ececec" stroke="#c0c0c0"/><rect x="4" y="4" width="2" height="2" fill="#1a1a1a"/><rect x="4" y="7" width="2" height="2" fill="#5a5488"/><rect x="4" y="10" width="2" height="2" fill="#1a1a1a"/><path d="M7 5.5H11.5M7 8.5H11.5M7 11.5H11.5" stroke="#8a84b0" stroke-width="1"/></svg></div><div class="t " style="left:333.20px;top:379.80px;color:#000;font-size:11.4px;transform:scale(0.9870,1.05);transform-origin:0 7px;">Configure pre-boot recovery message and URL</div><div class="t " style="left:655.56px;top:379.80px;color:#000;font-size:11.4px;transform:scale(1.0425,1.05);transform-origin:0 7px;">Not configured</div><div class="b" style="left:316px;top:397px"><svg width="15" height="16" viewBox="0 0 15 16"><path d="M1.5 0.5H10L13.5 4V14.5H1.5Z" fill="#fff" stroke="#a8a8a8"/><path d="M13.5 4.5V15.5H2" fill="none" stroke="#d0d0d0"/><path d="M10 0.5V4H13.5" fill="#ececec" stroke="#c0c0c0"/><rect x="4" y="4" width="2" height="2" fill="#1a1a1a"/><rect x="4" y="7" width="2" height="2" fill="#5a5488"/><rect x="4" y="10" width="2" height="2" fill="#1a1a1a"/><path d="M7 5.5H11.5M7 8.5H11.5M7 11.5H11.5" stroke="#8a84b0" stroke-width="1"/></svg></div><div class="t " style="left:333.20px;top:397.98px;color:#000;font-size:11.4px;transform:scale(0.9945,1.05);transform-origin:0 7px;">Reset platform validation data after BitLocker recovery</div><div class="t " style="left:655.56px;top:397.98px;color:#000;font-size:11.4px;transform:scale(1.0425,1.05);transform-origin:0 7px;">Not configured</div><div class="b" style="left:316px;top:415px"><svg width="15" height="16" viewBox="0 0 15 16"><path d="M1.5 0.5H10L13.5 4V14.5H1.5Z" fill="#fff" stroke="#a8a8a8"/><path d="M13.5 4.5V15.5H2" fill="none" stroke="#d0d0d0"/><path d="M10 0.5V4H13.5" fill="#ececec" stroke="#c0c0c0"/><rect x="4" y="4" width="2" height="2" fill="#1a1a1a"/><rect x="4" y="7" width="2" height="2" fill="#5a5488"/><rect x="4" y="10" width="2" height="2" fill="#1a1a1a"/><path d="M7 5.5H11.5M7 8.5H11.5M7 11.5H11.5" stroke="#8a84b0" stroke-width="1"/></svg></div><div class="t " style="left:333.20px;top:416.16px;color:#000;font-size:11.4px;transform:scale(1.0085,1.05);transform-origin:0 7px;">Use enhanced Boot Configuration Data validation profile</div><div class="t " style="left:655.56px;top:416.16px;color:#000;font-size:11.4px;transform:scale(1.0425,1.05);transform-origin:0 7px;">Not configured</div><div class="b" style="left:311px;top:542px;width:456px;height:16px;background:#f0f0f0"></div><div class="b" style="left:328px;top:543px;width:309px;height:14px;background:#cdcdcd"></div><svg class="b" style="left:316px;top:546px" width="8" height="9" viewBox="0 0 8 9"><path d="M5.9 1.4L2.5 4.5L5.9 7.6" fill="none" stroke="#606060" stroke-width="1.9"/></svg><svg class="b" style="left:755px;top:546px" width="8" height="9" viewBox="0 0 8 9"><path d="M2.1 1.4L5.5 4.5L2.1 7.6" fill="none" stroke="#606060" stroke-width="1.9"/></svg><div class="b" style="left:310px;top:561px;width:457px;height:17px;background:#f0f0f0"></div><div class="b" style="left:1px;top:577px;width:306px;height:1px;background:#a4a8ae"></div><div class="b" style="left:1px;top:578px;width:766px;height:22px;background:#f0f0f0"></div><div class="b" style="left:310px;top:578px;width:457px;height:1px;background:#dadada"></div><svg class="b" style="left:305px;top:559px" width="140" height="20" viewBox="305 559 140 20"><path d="M310.5 561.5L318.8 577.5H372L379.5 561.5" fill="#f0f0f0" stroke="#3c3c3c" stroke-width="1"/><path d="M318.8 577.5H372" stroke="#a8a8a8" stroke-width="1"/><path d="M373.5 560.5L381.1 577.5H431.3L438.9 560.5" fill="#fff" stroke="#3c3c3c" stroke-width="1"/><path d="M381.1 577.5H431.3" stroke="#a8a8a8" stroke-width="1"/></svg><div class="t " style="left:321.24px;top:562.60px;color:#000;font-size:11.4px;transform:scale(0.9638,1.05);transform-origin:0 7px;">Extended</div><div class="t " style="left:382.41px;top:562.40px;color:#000;font-size:11.4px;transform:scale(0.9867,1.05);transform-origin:0 7px;">Standard</div><div class="b" style="left:557px;top:580px;width:1px;height:20px;background:#d7d7d7"></div><div class="b" style="left:685px;top:580px;width:1px;height:20px;background:#d7d7d7"></div><div class="t " style="left:2.62px;top:583.00px;color:#000;font-size:11.4px;transform:scale(0.9787,1.05);transform-origin:0 7px;">18 setting(s)</div><div class="b" style="left:8px;top:7px"><svg width="15" height="15" viewBox="0 0 15 15"><path d="M3.2 0.5H12.6L12 11.5H2.6Z" fill="#fbf2cc" stroke="#b4b0a4" stroke-width="0.9"/><path d="M11.6 1.5V11" stroke="#f3e2a0" stroke-width="1"/><circle cx="12.9" cy="2.1" r="1.5" fill="#c9a850" stroke="#8e7a48" stroke-width="0.6"/><path d="M4.3 3.5H9.3M4.3 5.5H9.3M4.3 7.5H9.3M4.3 9.5H9.3" stroke="#8c8cb0" stroke-width="1"/><path d="M0.5 12.3Q0.5 11 1.8 11H10.2V14.5H1.8Q0.5 14.5 0.5 13.3Z" fill="#f0da92" stroke="#c0a35a" stroke-width="0.8"/><path d="M1.8 12.6H8.6" stroke="#fffae0" stroke-width="1"/><rect x="10" y="11" width="2.2" height="3.5" fill="#a6a6a6"/></svg></div><div class="b" style="left:0px;top:0px;width:768px;height:601px;border:1px solid #1883d7;box-sizing:border-box;background:transparent"></div>
</body></html>
